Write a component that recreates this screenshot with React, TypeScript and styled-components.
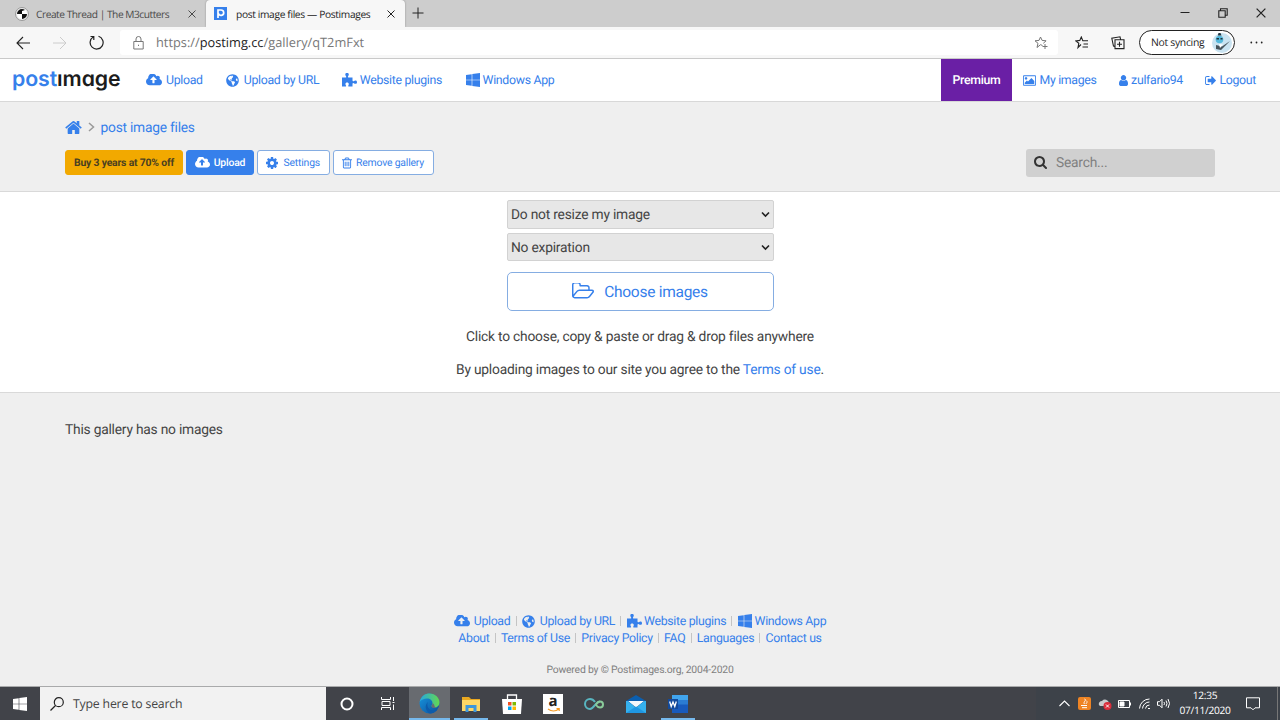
import React from "react";
import styled, { createGlobalStyle, css } from "styled-components";
import { FaGlobeAmericas } from "react-icons/fa";

const GlobalStyle = createGlobalStyle`
  * { box-sizing: border-box; }
  html, body { margin: 0; padding: 0; }
  body { width: 1280px; height: 720px; overflow: hidden; background: #efefef; text-rendering: geometricPrecision; }
  button { text-rendering: inherit; }
  svg { display: block; flex: none; }
`;

const BLUE = "#3680eb";
const uiFont = css`font-family: "Open Sans", "Noto Sans", sans-serif;`;

const paths = {
  cloud:
    "M1280 864q0-14-9-23l-352-352q-9-9-23-9t-23 9l-351 351q-10 12-10 24 0 14 9 23t23 9h224v352q0 13 9.500 22.500t22.500 9.500h192q13 0 22.500-9.500t9.500-22.500v-352h224q13 0 22.500-9.500t9.500-22.500zm640 288q0 159-112.500 271.500t-271.500 112.500h-1088q-185 0-316.500-131.500t-131.500-316.500q0-130 70-240t188-165q-2-30-2-43 0-212 150-362t362-150q156 0 285.500 87t188.500 231q71-62 166-62 106 0 181 75t75 181q0 76-41 138 130 31 213.500 135.500t83.500 238.500z",
  home: "M1472 992v480q0 26-19 45t-45 19h-384v-384h-256v384h-384q-26 0-45-19t-19-45v-480q0-1 .5-3t.5-3l575-474 575 474q1 2 1 6zm223-69l-62 74q-8 9-21 11h-3q-13 0-21-7l-692-577-692 577q-12 8-24 7-13-2-21-11l-62-74q-8-10-7-23.500t11-21.500l719-599q32-26 76-26t76 26l244 204v-195q0-14 9-23t23-9h192q14 0 23 9t9 23v408l219 182q10 8 11 21.500t-7 23.500z",
  trash:
    "M704 736v576q0 14-9 23t-23 9h-64q-14 0-23-9t-9-23v-576q0-14 9-23t23-9h64q14 0 23 9t9 23zm256 0v576q0 14-9 23t-23 9h-64q-14 0-23-9t-9-23v-576q0-14 9-23t23-9h64q14 0 23 9t9 23zm256 0v576q0 14-9 23t-23 9h-64q-14 0-23-9t-9-23v-576q0-14 9-23t23-9h64q14 0 23 9t9 23zm128 724v-948h-896v948q0 22 7 40.500t14.500 27 10.500 8.500h832q3 0 10.500-8.500t14.500-27 7-40.500zm-672-1076h448l-48-117q-7-9-17-11h-317q-10 2-17 11zm928 32v64q0 14-9 23t-23 9h-96v948q0 83-47 143.500t-113 60.500h-832q-66 0-113-58.500t-47-141.500v-952h-96q-14 0-23-9t-9-23v-64q0-14 9-23t23-9h309l70-167q15-37 54-63t79-26h320q40 0 79 26t54 63l70 167h309q14 0 23 9t9 23z",
  folder:
    "M1845 931q0-35-53-35h-1088q-40 0-85.500 21.500t-71.500 52.500l-294 363q-18 24-18 40 0 35 53 35h1088q40 0 86-22t71-53l294-363q18-22 18-39zm-1141-163h768v-160q0-40-28-68t-68-28h-576q-40 0-68-28t-28-68v-64q0-40-28-68t-68-28h-320q-40 0-68 28t-28 68v853l256-315q44-53 116-87.500t140-34.500zm1269 163q0 62-46 120l-295 363q-43 53-116 87.500t-140 34.500h-1088q-92 0-158-66t-66-158v-960q0-92 66-158t158-66h320q92 0 158 66t66 158v32h544q92 0 158 66t66 158v160h192q54 0 99 24.500t67 70.500q15 32 15 68z",
  picture:
    "M576 576q0 80-56 136t-136 56-136-56-56-136 56-136 136-56 136 56 56 136zm1024 384v448h-1408v-192l320-320 160 160 512-512zm96-704h-1600q-13 0-22.500 9.500t-9.500 22.500v1216q0 13 9.500 22.500t22.500 9.500h1600q13 0 22.500-9.500t9.500-22.500v-1216q0-13-9.500-22.500t-22.500-9.500zm160 32v1216q0 66-47 113t-113 47h-1600q-66 0-113-47t-47-113v-1216q0-66 47-113t113-47h1600q66 0 113 47t47 113z",
  user: "M1536 1399q0 109-62.500 187t-150.500 78h-854q-88 0-150.500-78t-62.500-187q0-85 8.500-160.500t31.500-152 58.500-131 94-89 134.500-34.500q131 128 313 128t313-128q76 0 134.500 34.500t94 89 58.500 131 31.500 152 8.500 160.500zm-256-887q0 159-112.500 271.500t-271.500 112.500-271.500-112.500-112.500-271.500 112.500-271.500 271.500-112.500 271.500 112.500 112.500 271.500z",
  signOut:
    "M704 1440q0 4 1 20t.5 26.500-3 23.500-10 19.500-20.500 6.500h-320q-119 0-203.500-84.500t-84.500-203.500v-704q0-119 84.500-203.500t203.500-84.500h320q13 0 22.500 9.500t9.500 22.500q0 4 1 20t.5 26.500-3 23.500-10 19.500-20.500 6.500h-320q-66 0-113 47t-47 113v704q0 66 47 113t113 47h312l11.500 1 11.500 3 8 5.500 7 9 2 13.500zm928-544q0 26-19 45l-544 544q-19 19-45 19t-45-19-19-45v-288h-448q-26 0-45-19t-19-45v-384q0-26 19-45t45-19h448v-288q0-26 19-45t45-19 45 19l544 544q19 19 19 45z",
  cog: "M1152 896q0-106-75-181t-181-75-181 75-75 181 75 181 181 75 181-75 75-181zm512-109v222q0 12-8 23t-20 13l-185 28q-19 54-39 91 35 50 107 138 10 12 10 25t-9 23q-27 37-99 108t-94 71q-12 0-26-9l-138-108q-44 23-91 38-16 136-29 186-7 28-36 28h-222q-14 0-24.500-8.500t-11.500-21.500l-28-184q-49-16-90-37l-141 107q-10 9-25 9-14 0-25-11-126-114-165-168-7-10-7-23 0-12 8-23 15-21 51-66.500t54-70.500q-27-50-41-99l-183-27q-13-2-21-12.500t-8-23.500v-222q0-12 8-23t19-13l186-28q14-46 39-92-40-57-107-138-10-12-10-24 0-10 9-23 26-36 98.500-107.500t94.500-71.500q13 0 26 10l138 107q44-23 91-38 16-136 29-186 7-28 36-28h222q14 0 24.500 8.500t11.500 21.500l28 184q49 16 90 37l142-107q9-9 24-9 13 0 25 10 129 119 165 170 7 8 7 22 0 12-8 23-15 21-51 66.500t-54 70.500q26 50 41 98l183 28q13 2 21 12.500t8 23.500z",
  search:
    "M1216 832q0-185-131.500-316.500t-316.500-131.500-316.500 131.500-131.500 316.500 131.500 316.500 316.500 131.500 316.500-131.500 131.500-316.500zm512 832q0 52-38 90t-90 38q-54 0-90-38l-343-342q-179 124-399 124-143 0-273.500-55.500t-225-150-150-225-55.500-273.500 55.500-273.500 150-225 225-150 273.500-55.500 273.500 55.500 225 150 150 225 55.500 273.500q0 220-124 399l343 343q37 37 37 90z",
};

/* Tight bounding boxes of the glyphs above */
const boxes: Record<keyof typeof paths, string> = {
  cloud: "0 256 1920 1280",
  home: "89 253 1614 1283",
  trash: "192 128 1408 1536",
  folder: "64 256 1909 1280",
  picture: "-64 128 1920 1536",
  user: "256 128 1280 1536",
  signOut: "64 256 1568 1280",
  cog: "128 128 1536 1536",
  search: "64 128 1664 1664",
};

const Glyph = ({ name, w, h }: { name: keyof typeof paths; w: number; h: number }) => (
  <svg width={w} height={h} viewBox={boxes[name]} fill="currentColor">
    <path d={paths[name]} />
  </svg>
);

const Puzzle = () => (
  <svg width="15" height="14" viewBox="0 0 15 14" fill="currentColor">
    <path d="M0 4.600h3.500c.7 0 1-.4.6-1.100C3.500 2.300 3.300 1.800 3.300 1.400 3.300.5 4 0 5 0s1.800.5 1.800 1.400c0 .5-.2 1-.6 1.700-.5.800-.3 1.500.6 1.500h3.700v2.700c0 .9.4 1.100 1.100.9.700-.3 1.200-.6 1.900-.6.900 0 1.500.7 1.500 1.600s-.6 1.600-1.500 1.600c-.6 0-1.100-.3-1.700-.6-.8-.4-1.300-.1-1.300.7V13.500H7c-.7 0-.9-.4-.7-1 .3-.7.500-1 .5-1.600 0-.9-.7-1.500-1.700-1.500s-1.700.6-1.700 1.500c0 .6.300 1 .6 1.600.3.700 0 1-.6 1.100H0z" />
  </svg>
);

const WindowsMark = ({ size }: { size: number }) => (
  <svg width={size} height={size} viewBox="0 0 14 14" fill="currentColor">
    <path d="M0 2l5.700-.8v5.500H0zM6.300 1.100L14 0v6.700H6.300zM0 7.300h5.700v5.500L0 12zM6.300 7.300H14V14l-7.700-1.100z" />
  </svg>
);

const Line = ({ w, h = w, box, children, sw = 1 }: { w: number; h?: number; box: string; sw?: number; children: React.ReactNode }) => (
  <svg width={w} height={h} viewBox={box} fill="none" stroke="currentColor" strokeWidth={sw}>
    {children}
  </svg>
);

const Screen = styled.div`
  width: 1280px;
  height: 720px;
  display: flex;
  flex-direction: column;
  background: #efefef;
`;

/* ---------- Browser chrome ---------- */
const TabStrip = styled.div`
  height: 27px;
  flex: none;
  display: flex;
  background: #cdcdcd;
  color: #222;
  ${uiFont}
`;
const Tab = styled.div<{ $active?: boolean; $width: number }>`
  width: ${(p) => p.$width}px;
  height: 27px;
  display: flex;
  align-items: center;
  padding: 0 8px 0 ${(p) => (p.$active ? 8 : 15)}px;
  background: ${(p) => (p.$active ? "#f7f7f7" : "transparent")};
  border-radius: 4px 4px 0 0;
  color: ${(p) => (p.$active ? "#222" : "#4a4a4a")};
  box-shadow: ${(p) => (p.$active ? "0 0 2px rgba(0,0,0,.35)" : "none")};
`;
const TabTitle = styled.span<{ $gap: number; $track: number }>`
  flex: 1;
  margin-left: ${(p) => p.$gap}px;
  font-size: 10.2px;
  letter-spacing: ${(p) => p.$track}px;
  white-space: nowrap;
`;
const NewTab = styled.div`
  flex: 1;
  padding: 7px 0 0 7px;
`;
const WindowButtons = styled.div`
  display: flex;
  align-items: center;
  gap: 28px;
  padding-right: 14px;
  height: 25px;
`;
const Toolbar = styled.div`
  height: 32px;
  flex: none;
  display: flex;
  align-items: center;
  background: #f7f7f7;
  border-bottom: 1px solid #c9c9c9;
  padding: 0 16px;
  color: #222;
  ${uiFont}
`;
const NavButtons = styled.div`
  display: flex;
  align-items: center;
  gap: 22.5px;
  width: 104px;
`;
const AddressBar = styled.div`
  width: 938px;
  height: 25px;
  display: flex;
  align-items: center;
  padding: 0 10px 0 13px;
  background: #fff;
  border-radius: 3px;
  color: #777;
`;
const Url = styled.span`
  flex: 1;
  margin-left: 12px;
  padding-bottom: 2px;
  font-size: 12.8px;
  b { font-weight: 400; color: #222; }
`;
const ToolbarActions = styled.div`
  flex: 1;
  display: flex;
  align-items: center;
  padding-left: 17px;
`;
const Profile = styled.div`
  width: 96px;
  height: 25px;
  margin: 0 15px 0 14px;
  display: flex;
  align-items: center;
  justify-content: space-between;
  padding: 0 2px 0 11px;
  border: 1px solid #222;
  border-radius: 13px;
  background: #fff;
  font-size: 10.4px;
  letter-spacing: -0.3px;
  white-space: nowrap;
`;
const IconSlot = styled.span<{ $w: number; $dim?: boolean }>`
  width: ${(p) => p.$w}px;
  display: flex;
  color: ${(p) => (p.$dim ? "#ccc" : "inherit")};
`;

/* ---------- Site header ---------- */
const SiteHeader = styled.header`
  height: 43px;
  flex: none;
  display: flex;
  align-items: center;
  background: #fff;
  border-bottom: 1px solid #d8d8d8;
  padding: 0 24px 0 12px;
  font: 12.3px Roboto, sans-serif;
  letter-spacing: -0.3px;
  color: ${BLUE};
`;
const Logo = styled.div`
  width: 134px;
  padding-bottom: 3px;
  font: 600 21.3px/24px Inter, sans-serif;
  font-feature-settings: "cv11", "ss03";
  letter-spacing: -0.1px;
  color: ${BLUE};
  b { font-weight: 600; color: #1c1c1c; }
`;
const NavLink = styled.a<{ $gap?: number; $after?: number }>`
  display: flex;
  align-items: center;
  gap: ${(p) => p.$gap ?? 3}px;
  margin-right: ${(p) => p.$after ?? 0}px;
  white-space: nowrap;
`;
const LinkText = styled.span<{ $drop?: number }>`
  padding-top: ${(p) => p.$drop ?? 2}px;
`;
const Spacer = styled.div`
  flex: 1;
`;
const Premium = styled.div`
  width: 71px;
  height: 42px;
  margin-right: 11.5px;
  display: flex;
  align-items: center;
  justify-content: center;
  background: #6a1fa5;
  color: #fff;
  font-weight: 500;
`;

/* ---------- Gallery header ---------- */
const GalleryHeader = styled.section`
  height: 90px;
  flex: none;
  padding: 16px 65px 0;
  border-bottom: 1px solid #d9d9d9;
  font-family: Roboto, sans-serif;
`;
const Crumbs = styled.div`
  height: 18px;
  display: flex;
  align-items: center;
  font-size: 13.8px;
  letter-spacing: -0.24px;
  color: ${BLUE};
`;
const Chevron = styled.span`
  width: 18.5px;
  padding-left: 6px;
  color: #999;
  display: flex;
`;
const ActionRow = styled.div`
  display: flex;
  align-items: center;
  gap: 3px;
  margin-top: 12px;
  height: 29px;
`;
const ActionButton = styled.button<{ $kind?: "sale" | "solid"; $w: number; $gap?: number }>`
  width: ${(p) => p.$w}px;
  height: 25px;
  display: flex;
  align-items: center;
  justify-content: center;
  gap: ${(p) => p.$gap ?? 4}px;
  padding: 0;
  border-radius: 3px;
  border: 1px solid ${(p) => (p.$kind === "sale" ? "#f2a900" : p.$kind === "solid" ? BLUE : "#85ade2")};
  background: ${(p) => (p.$kind === "sale" ? "#f2a900" : p.$kind === "solid" ? BLUE : "#fff")};
  color: ${(p) => (p.$kind === "sale" ? "#4a4020" : p.$kind === "solid" ? "#fff" : BLUE)};
  font: ${(p) => (p.$kind === "sale" ? 700 : p.$kind === "solid" ? 500 : 400)} 10.4px Roboto, sans-serif;
  letter-spacing: -0.18px;
  white-space: nowrap;
`;
const SearchBox = styled.div`
  width: 189px;
  height: 28px;
  display: flex;
  align-items: center;
  gap: 9px;
  padding-left: 8px;
  border-radius: 3px;
  background: #d0d0d0;
  color: #333;
  font-size: 13.8px;
  letter-spacing: -0.22px;
  span { color: #808080; padding-top: 1px; }
`;

/* ---------- Upload area ---------- */
const UploadArea = styled.section`
  height: 201px;
  flex: none;
  display: flex;
  flex-direction: column;
  align-items: center;
  padding-top: 8px;
  background: #fff;
  border-bottom: 1px solid #d9d9d9;
  color: #444;
  font: 13.8px Roboto, sans-serif;
  letter-spacing: -0.22px;
`;
const SelectBox = styled.div`
  width: 267px;
  height: 29px;
  margin-bottom: 4px;
  display: flex;
  align-items: center;
  justify-content: space-between;
  padding: 0 3px 0 3.5px;
  border: 1px solid #d2d2d2;
  border-radius: 2px;
  background: #e7e7e7;
  svg { color: #222; }
`;
const ChooseButton = styled.button`
  width: 267px;
  height: 39px;
  margin: 7px 0 15px;
  display: flex;
  align-items: center;
  justify-content: center;
  gap: 10px;
  border: 1px solid #85ade2;
  border-radius: 5px;
  background: #fff;
  color: ${BLUE};
  font: 15.5px Roboto, sans-serif;
  letter-spacing: -0.27px;
  svg { margin-bottom: 2px; }
`;
const Note = styled.p`
  margin: 0 0 11px;
  line-height: 22px;
  a { color: ${BLUE}; }
`;
const EmptyNote = styled.p`
  flex: 1;
  margin: 0;
  padding: 28px 65px 0;
  font: 13.8px/18px Roboto, sans-serif;
  letter-spacing: -0.22px;
  color: #444;
`;

/* ---------- Footer ---------- */
const Footer = styled.footer`
  flex: none;
  height: 73px;
  display: flex;
  flex-direction: column;
  align-items: center;
  font: 12.3px Roboto, sans-serif;
  letter-spacing: -0.31px;
  color: ${BLUE};
`;
const FooterRow = styled.div<{ $gap: number }>`
  height: 16.5px;
  display: flex;
  align-items: center;
  gap: ${(p) => p.$gap}px;
`;
const Bar = styled.i`
  width: 1px;
  height: 10px;
  background: #c4c4c4;
`;
const Powered = styled.div`
  margin-top: 17px;
  font-size: 10.4px;
  letter-spacing: -0.19px;
  line-height: 14px;
  color: #808080;
`;

/* ---------- Taskbar ---------- */
const Taskbar = styled.div`
  height: 34px;
  flex: none;
  display: flex;
  background: #414349;
  border-top: 1px solid #a9aaab;
  color: #fff;
  ${uiFont}
`;
const TaskButton = styled.div<{ $w: number; $active?: boolean; $running?: boolean; $inset?: number }>`
  width: ${(p) => p.$w}px;
  height: 33px;
  margin: 0 ${(p) => p.$inset ?? 0}px;
  display: flex;
  align-items: center;
  justify-content: center;
  background: ${(p) => (p.$active ? "#686b70" : "transparent")};
  box-shadow: ${(p) => (p.$running ? "inset 0 -2px #76b9ed" : "none")};
`;
const TaskSearch = styled.div`
  width: 286px;
  display: flex;
  align-items: center;
  gap: 9px;
  padding-left: 10px;
  background: #f2f2f2;
  color: #444;
  font-size: 12.3px;
  letter-spacing: -0.2px;
  svg { color: #222; }
`;
const Apps = styled.div`
  flex: 1;
  display: flex;
`;
const Tray = styled.div`
  display: flex;
  align-items: center;
  background: #3d4249;
  padding-left: 23px;
`;
const Clock = styled.div`
  width: 58px;
  margin: 0 12px 0 4px;
  padding-bottom: 1px;
  text-align: center;
  font-size: 10.2px;
  line-height: 15px;
  letter-spacing: -0.3px;
  white-space: nowrap;
`;
const ShowDesktop = styled.div`
  width: 3px;
  height: 33px;
  margin-left: 17px;
  border-left: 1px solid #777;
`;
const AmazonTile = styled.div`
  width: 20px;
  height: 20px;
  display: flex;
  flex-direction: column;
  align-items: center;
  background: #fff;
  color: #222;
  font: 700 15px/14px "Open Sans", sans-serif;
`;

const siteLinks = [
  { label: "Upload", icon: <Glyph name="cloud" w={16} h={12} />, gap: 4, after: 23 },
  { label: "Upload by URL", icon: <FaGlobeAmericas size={13} />, gap: 5, after: 23 },
  { label: "Website plugins", icon: <Puzzle />, gap: 2.5, after: 23.500 },
  { label: "Windows App", icon: <WindowsMark size={14} />, gap: 3, after: 0 },
];

const Close = ({ size = 8 }: { size?: number }) => (
  <Line w={size} box="0 0 8 8" sw={1}>
    <path d="M.5 .5l7 7M7.500 .5l-7 7" />
  </Line>
);
const DownArrow = () => (
  <Line w={9} h={9} box="0 0 9 9" sw={1.6}>
    <path d="M1 2.500l3.500 3.500L8 2.500" />
  </Line>
);

export default function App() {
  return (
    <Screen>
      <GlobalStyle />
      <TabStrip>
        <Tab $width={206}>
          <svg width="14" height="14" viewBox="0 0 14 14">
            <circle cx="7" cy="7" r="6.500" fill="#eee" stroke="#999" />
            <circle cx="7" cy="7" r="5" fill="#fff" />
            <path d="M7 7V2a5 5 0 0 0-5 5zM7 7v5a5 5 0 0 0 5-5zM7 2a5 5 0 0 1 3 1L7 4z" fill="#111" />
          </svg>
          <TabTitle $gap={7} $track={-0.47}>Create Thread | The M3cutters</TabTitle>
          <IconSlot $w={10}><Close /></IconSlot>
        </Tab>
        <Tab $active $width={199}>
          <svg width="13" height="13" viewBox="0 0 13 13">
            <path fill={BLUE} d="M0 0h13v13H0z" />
            <path d="M4 11V6.200M4 6.200V3h3a2.700 2.700 0 1 1-2.600 3.400" fill="none" stroke="#fff" strokeWidth="1.700" />
          </svg>
          <TabTitle $gap={9} $track={-0.34}>post image files — Postimages</TabTitle>
          <IconSlot $w={10}><Close /></IconSlot>
        </Tab>
        <NewTab>
          <Line w={12} box="0 0 12 12"><path d="M6 .5v11M.5 6h11" /></Line>
        </NewTab>
        <WindowButtons>
          <Line w={10} box="0 0 10 10"><path d="M.5 4.500h9" /></Line>
          <Line w={10} box="0 0 10 10" sw={1.1}>
            <path d="M.8 2.800h6.400v6.400H.8zM2.500 2.500V.8h6.700v6.400H7.500" />
          </Line>
          <Close size={10} />
        </WindowButtons>
      </TabStrip>

      <Toolbar>
        <NavButtons>
          <Line w={14} box="0 0 14 14" sw={1.1}><path d="M14 7H1M7 1L1 7l6 6" /></Line>
          <IconSlot $w={14} $dim>
            <Line w={14} box="0 0 14 14"><path d="M0 7h13M7 1l6 6-6 6" /></Line>
          </IconSlot>
          <Line w={15} box="0 0 15 15" sw={1.2}>
            <path d="M4.200 2A6.500 6.500 0 1 0 9.500 1.300M1.500 1.500h3.300V5" />
          </Line>
        </NavButtons>
        <AddressBar>
          <Line w={11} h={14} box="0 0 11 14" sw={1}>
            <path d="M.8 5.500h9.400v7.500H.8zM3 5.500V3a2.500 2.500 0 0 1 5 0v2.500M5.500 8.700v1.300" />
          </Line>
          <Url>https://<b>postimg.cc</b>/gallery/qT2mFxt</Url>
          <Line w={14} box="0 0 14 14">
            <path d="M8.500 9.500L6.500 8.700 3 11.500l1-4.200L1 4.800l4-.4L6.500 1l1.600 3.400 4 .4L9.300 7.300M8.500 10.500h5M11 8v5" />
          </Line>
        </AddressBar>
        <ToolbarActions>
          <IconSlot $w={36}>
            <Line w={14} box="0 0 14 14" sw={1.100}>
              <path d="M6 8.500L3 11.500l.8-4.200L.8 5l4-.6L6.300 1l1.500 3.700H13M8.500 8H13M7.500 11H13" />
            </Line>
          </IconSlot>
          <Line w={14} box="0 0 14 14" sw={1.100}>
            <path d="M4 3.800h9v8.800H4zM8.500 5.700v5M6 8.200h5M3.800 10.500L2.500 10 .8 2.300 9 .8l.6 2.500" />
          </Line>
          <Profile>
            Not syncing
            <svg width="20" height="20" viewBox="0 0 20 20">
              <circle cx="10" cy="10" r="10" fill="#c9e3f1" />
              <circle cx="7.500" cy="6.500" r="3.800" fill="#55b9dc" />
              <path d="M4.500 5h2.500v1.500H4.500zM8.500 5h2v1.500h-2zM6.500 0h2l1 2.500H5.800z" fill="#20343f" />
              <path d="M4 12l6 1.500 8-5.500-9 9-5-1z" fill="#46535b" />
              <path d="M7 11l4 .5-3 3.500z" fill="#fff" />
            </svg>
          </Profile>
          <svg width="13" height="3" viewBox="0 0 13 3" fill="#222">
            <circle cx="1.300" cy="1.500" r=".9" /><circle cx="6.500" cy="1.500" r=".9" /><circle cx="11.700" cy="1.500" r=".9" />
          </svg>
        </ToolbarActions>
      </Toolbar>

      <SiteHeader>
        <Logo>post<b>ımage</b></Logo>
        {siteLinks.map((l) => (
          <NavLink key={l.label} $gap={l.gap} $after={l.after}>{l.icon}<LinkText>{l.label}</LinkText></NavLink>
        ))}
        <Spacer />
        <Premium><LinkText>Premium</LinkText></Premium>
        <NavLink $after={22.5}><Glyph name="picture" w={13} h={11} /><LinkText>My images</LinkText></NavLink>
        <NavLink $after={22.5}><Glyph name="user" w={9} h={11} /><LinkText>zulfario94</LinkText></NavLink>
        <NavLink><Glyph name="signOut" w={11} h={9} /><LinkText>Logout</LinkText></NavLink>
      </SiteHeader>

      <GalleryHeader>
        <Crumbs>
          <Glyph name="home" w={17} h={13} />
          <Chevron><Line w={7} h={10} box="0 0 7 10" sw={1.5}><path d="M1 1l4.500 4L1 9" /></Line></Chevron>
          <LinkText $drop={1}>post image files</LinkText>
        </Crumbs>
        <ActionRow>
          <ActionButton $kind="sale" $w={118}>Buy 3 years at 70% off</ActionButton>
          <ActionButton $kind="solid" $w={68}><Glyph name="cloud" w={15} h={11} />Upload</ActionButton>
          <ActionButton $w={72.5} $gap={5}><Glyph name="cog" w={12} h={12} />Settings</ActionButton>
          <ActionButton $w={101}><Glyph name="trash" w={10} h={12} />Remove gallery</ActionButton>
          <Spacer />
          <SearchBox><Glyph name="search" w={13} h={13} /><span>Search...</span></SearchBox>
        </ActionRow>
      </GalleryHeader>

      <UploadArea>
        <SelectBox><LinkText $drop={1}>Do not resize my image</LinkText><DownArrow /></SelectBox>
        <SelectBox><LinkText $drop={1}>No expiration</LinkText><DownArrow /></SelectBox>
        <ChooseButton><Glyph name="folder" w={22} h={16} />Choose images</ChooseButton>
        <Note>Click to choose, copy &amp; paste or drag &amp; drop files anywhere</Note>
        <Note>By uploading images to our site you agree to the <a>Terms of use</a>.</Note>
      </UploadArea>

      <EmptyNote>This gallery has no images</EmptyNote>

      <Footer>
        <FooterRow $gap={5.2}>
          {siteLinks.map((l, i) => (
            <React.Fragment key={l.label}>
              {i > 0 && <Bar />}
              <NavLink $gap={l.gap}>{l.icon}<LinkText>{l.label}</LinkText></NavLink>
            </React.Fragment>
          ))}
        </FooterRow>
        <FooterRow $gap={5.2}>
          {["About", "Terms of Use", "Privacy Policy", "FAQ", "Languages", "Contact us"].map((t, i) => (
            <React.Fragment key={t}>
              {i > 0 && <Bar />}
              <NavLink><LinkText>{t}</LinkText></NavLink>
            </React.Fragment>
          ))}
        </FooterRow>
        <Powered>Powered by © Postimages.org, 2004-2020</Powered>
      </Footer>

      <Taskbar>
        <TaskButton $w={40}><WindowsMark size={14} /></TaskButton>
        <TaskSearch>
          <Line w={14} box="0 0 14 14" sw={1.200}><circle cx="8.800" cy="5.200" r="4.500" /><path d="M5.500 8.500L.5 13.500" /></Line>
          Type here to search
        </TaskSearch>
        <Apps>
          <TaskButton $w={41}><Line w={14} box="0 0 14 14" sw={2}><circle cx="7" cy="7" r="5.500" /></Line></TaskButton>
          <TaskButton $w={42}>
            <Line w={14} h={13} box="0 0 14 13">
              <path d="M.5 0v2.500h9V0M.5 13v-2.500h9V13M1 4.500h8v4h-8zM12.500 0v4M12.500 7.500V13M11.500 5.500h2" />
            </Line>
          </TaskButton>
          <TaskButton $w={41} $active $running>
            <svg width="21" height="21" viewBox="0 0 21 21">
              <defs>
                <linearGradient id="edgeTop" x1="0" x2="1"><stop stopColor="#27a8e0" /><stop offset="1" stopColor="#64d84f" /></linearGradient>
                <linearGradient id="edgeBase" x1="0" y1="0" x2="1" y2="1"><stop stopColor="#1797df" /><stop offset="1" stopColor="#0c4f9c" /></linearGradient>
              </defs>
              <circle cx="10.500" cy="10.500" r="10" fill="url(#edgeBase)" />
              <path d="M.6 9C2 3 6 .5 10.500 .5c6 0 10 4.500 10 9 0 3.500-2.500 5-5 5-2 0-3-.7-3-1.500s1-1 1-3c0-2.500-2.500-4.500-5.500-4.500C5 5.500 2 7 .6 9z" fill="url(#edgeTop)" />
              <path d="M9 9c-2 4 1 9 6 8.500 2 0 3-.6 4-1.500-3 4-6 4.600-8 4.500C6 18 5.500 12 9 9z" fill="#0d5bab" />
              <path d="M12.500 13c0-.8 1-1 1-3 4 3 .5 7 6 3-1 2.500-7 3-7 0z" fill="#686b70" />
            </svg>
          </TaskButton>
          <TaskButton $w={34} $running $inset={3.5}>
            <svg width="18" height="16" viewBox="0 0 18 16">
              <path d="M0 1h7l2 2h9v12H0z" fill="#e9a820" /><path d="M0 4h18v11H0z" fill="#ffd766" />
              <path d="M3.500 16V9h11v7h-3v-4h-5v4z" fill="#3e97dc" />
            </svg>
          </TaskButton>
          <TaskButton $w={41}>
            <svg width="20" height="20" viewBox="0 0 20 20">
              <path d="M5.500 6V1h9v5" fill="none" stroke="#fff" strokeWidth="1.300" /><path d="M0 5h20l-1 15H1z" fill="#fff" />
              <path d="M6 8h3.500v3.500H6z" fill="#f25022" /><path d="M10.500 8H14v3.500h-3.500z" fill="#7fba00" />
              <path d="M6 12.500h3.500V16H6z" fill="#00a4ef" /><path d="M10.500 12.500H14V16h-3.500z" fill="#ffb900" />
            </svg>
          </TaskButton>
          <TaskButton $w={42}>
            <AmazonTile>
              a
              <svg width="13" height="5" viewBox="0 0 13 5"><path d="M1 1q5.500 4 11 0M9.500 .7h2.700V3" fill="none" stroke="#f59a23" strokeWidth="1.200" /></svg>
            </AmazonTile>
          </TaskButton>
          <TaskButton $w={41}>
            <svg width="21" height="12" viewBox="0 0 21 12" fill="none" strokeWidth="2">
              <path d="M11 4Q9 1 6 1a5 5 0 1 0 0 10c4 0 5.500-7.500 10-7.500" stroke="#58b5c0" />
              <path d="M11.500 6.500C13 8.500 14.300 9.500 16 9.500a3 3 0 1 0 0-6c-1.500 0-2.700 1-4 3" stroke="#8acb9a" />
            </svg>
          </TaskButton>
          <TaskButton $w={42}>
            <svg width="20" height="18" viewBox="0 0 20 18">
              <path d="M0 6l10-6 10 6v4H0z" fill="#0b5fb0" /><path d="M2 6h16L10 12.500z" fill="#f4f8fb" />
              <path d="M0 6h1.500L10 12.500 18.500 6H20v12H0z" fill="#35b1ee" /><path d="M0 18l10-6.500L20 18z" fill="#1f97e2" />
            </svg>
          </TaskButton>
          <TaskButton $w={34} $running $inset={3.5}>
            <svg width="20" height="18" viewBox="0 0 20 18">
              <path d="M4 0h16v18H4z" fill="#185abd" /><path d="M4 0h16v5H4z" fill="#41a5ee" /><path d="M4 5h16v4.500H4z" fill="#2b7cd3" />
              <path d="M0 4h10v10H0z" fill="#124a9c" />
              <path d="M1.700 6.500l1.500 5L5 7l1.800 4.500 1.500-5" stroke="#fff" fill="none" strokeWidth="1.300" />
            </svg>
          </TaskButton>
        </Apps>
        <Tray>
          <IconSlot $w={19}><Line w={11} h={7} box="0 0 11 7" sw={1.100}><path d="M.5 6L5.500 1l5 5" /></Line></IconSlot>
          <IconSlot $w={20}>
            <svg width="13" height="13" viewBox="0 0 13 13">
              <rect width="13" height="13" rx="2" fill="#ee8424" />
              <path d="M6.500 2c3 1-2 3 0 5M8.500 4c2 1-1 2 0 3M3 8.500h6M4 10.700h5" stroke="#fff" fill="none" />
            </svg>
          </IconSlot>
          <IconSlot $w={20}>
            <svg width="14" height="12" viewBox="0 0 14 12">
              <path d="M1 7a3 3 0 0 1 3-4 4 4 0 0 1 7 2l-2 3H2z" fill="#c9cbce" />
              <circle cx="9.500" cy="8" r="4" fill="#db2d3b" /><path d="M8 6.500l3 3M11 6.500l-3 3" stroke="#fff" />
            </svg>
          </IconSlot>
          <IconSlot $w={21}>
            <Line w={13} h={8} box="0 0 13 8"><path d="M.5 .5h11v7H.5zM12.500 2.500v3" /><path d="M2 2h4v4H2z" fill="#fff" /></Line>
          </IconSlot>
          <IconSlot $w={18}>
            <Line w={11} h={11} box="0 0 11 11">
              <path d="M.5 10.500a10 10 0 0 1 10-9.500M3.500 10.500a7 7 0 0 1 7-6.500M6.500 10.500a4 4 0 0 1 4-3.500M9 10.500h2" />
            </Line>
          </IconSlot>
          <IconSlot $w={15}>
            <Line w={14} h={11} box="0 0 14 11">
              <path d="M.5 3.700h2L5 1.200v8.600L2.500 7.300h-2zM7 4q1 1.500 0 3M9 2.500q2 3 0 6M11 1q3 4.500 0 9" />
            </Line>
          </IconSlot>
          <Clock>12:35<br />07/11/2020</Clock>
          <Line w={14} h={14} box="0 0 14 14"><path d="M.5 .8h13v10H9l-2 2-2-2H.5z" /></Line>
          <ShowDesktop />
        </Tray>
      </Taskbar>
    </Screen>
  );
}
